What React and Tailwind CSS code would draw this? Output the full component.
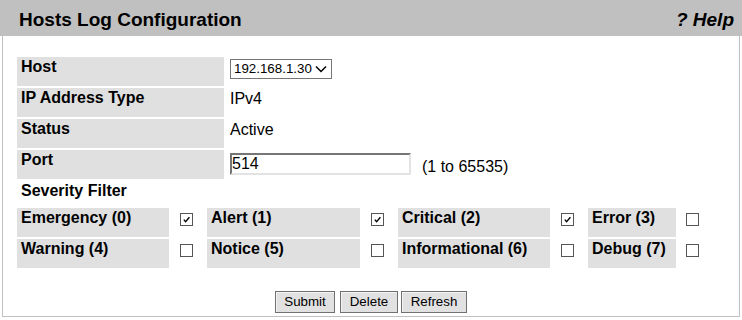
import React from "react";

const severity = [
  [
    ["Emergency (0)", true],
    ["Alert (1)", true],
    ["Critical (2)", true],
    ["Error (3)", false],
  ],
  [
    ["Warning (4)", false],
    ["Notice (5)", false],
    ["Informational (6)", false],
    ["Debug (7)", false],
  ],
];

const labelWidths = ["w-[152px]", "w-[153px]", "w-[152px]", "w-[88px]"];
const boxMargins = ["ml-[11px]", "ml-[11px]", "ml-[11px]", "ml-[10px]"];

function CheckBox({ checked }) {
  return (
    <span className="flex h-[13px] w-[13px] items-center justify-center border border-[#555] bg-white">
      {checked && (
        <svg width="9" height="9" viewBox="0 0 9 9">
          <path d="M1.8 4.6 L3.6 6.6 L7.4 2.2" stroke="#000" strokeWidth="1.4" fill="none" />
        </svg>
      )}
    </span>
  );
}

function Label({ children }) {
  return (
    <div className="h-[29px] w-[207px] shrink-0 bg-[#e0e0e0] pl-[4px] pt-[1px] text-[16px] font-bold leading-[18px]">
      {children}
    </div>
  );
}

function Btn({ children, className }) {
  return (
    <button className={`h-[22px] border border-[#707070] bg-[#e1e1e1] text-center text-[13.33px] leading-[18px] text-black shadow-[inset_1px_1px_0_#f4f4f4] ${className}`}>
      {children}
    </button>
  );
}

export default function App() {
  return (
    <div className="h-[320px] w-[742px] bg-white font-['Liberation_Sans',Arial,sans-serif] text-black">
      <div className="flex h-[36px] justify-between bg-[#c0c0c0] pl-[19px] pr-[8px] pt-[9px] text-[19px] font-bold leading-[22px]">
        <span>Hosts Log Configuration</span>
        <span className="italic">? Help</span>
      </div>
      <div className="mx-[2px] h-[281px] border-x border-b border-[#c0c0c0] pt-[21px]">
        <div className="flex flex-col gap-[2px] pl-[14px]">
          <div className="flex">
            <Label>Host</Label>
            <div className="ml-[6px] mt-[2px] flex h-[20px] w-[102px] items-center justify-between border border-[#767676] bg-white pl-[3px] pr-[4px] text-[13.33px]">
              <span>192.168.1.30</span>
              <svg width="12" height="8" viewBox="0 0 12 8">
                <path d="M1 1.5 L6 6.5 L11 1.5" stroke="#000" strokeWidth="1.5" fill="none" />
              </svg>
            </div>
          </div>
          <div className="flex">
            <Label>IP Address Type</Label>
            <div className="ml-[6px] pt-[2px] text-[16px] leading-[18px]">IPv4</div>
          </div>
          <div className="flex">
            <Label>Status</Label>
            <div className="ml-[6px] pt-[2px] text-[16px] leading-[18px]">Active</div>
          </div>
          <div className="flex">
            <Label>Port</Label>
            <div className="ml-[6px] mt-[3px] flex h-[22px] w-[181px] items-center border-2 border-b-[#e3e3e3] border-l-[#767676] border-r-[#e3e3e3] border-t-[#767676] bg-white pl-[0px] text-[16px] leading-[18px]">
              514
            </div>
            <div className="ml-[11px] pt-[8px] text-[16px] leading-[18px]">(1 to 65535)</div>
          </div>
          <div className="h-[25px] pl-[4px] pt-[1px] text-[16px] font-bold leading-[18px]">Severity Filter</div>
          {severity.map((row, r) => (
            <div key={r} className="flex">
              {row.map(([name, checked], i) => (
                <div key={name} className="flex">
                  <div className={`h-[29px] ${labelWidths[i]} shrink-0 bg-[#e0e0e0] pl-[4px] pt-[1px] text-[16px] font-bold leading-[18px]`}>
                    {name}
                  </div>
                  <div className={`w-[38px] shrink-0 pt-[5px]`}>
                    <div className={boxMargins[i]}>
                      <CheckBox checked={checked} />
                    </div>
                  </div>
                </div>
              ))}
            </div>
          ))}
        </div>
        <div className="mt-[23px] flex justify-center">
          <Btn className="w-[60px]">Submit</Btn>
          <Btn className="ml-[5px] w-[58px]">Delete</Btn>
          <Btn className="ml-[3px] w-[66px]">Refresh</Btn>
        </div>
      </div>
    </div>
  );
}
